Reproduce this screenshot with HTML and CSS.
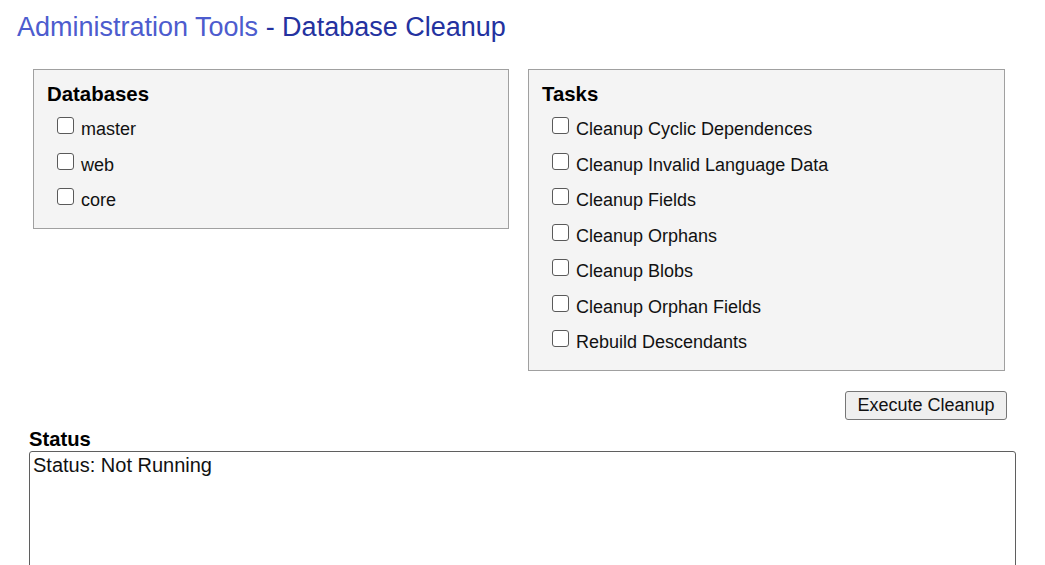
FILE: index.html
```html
<!DOCTYPE html>
<html lang="en">
<head>
<meta charset="utf-8">
<title>Database Cleanup</title>
<link rel="stylesheet" href="styles.css">
</head>
<body>
<h1 class="title"><a class="title-link" href="#">Administration Tools</a> - Database Cleanup</h1>
<div class="main">
  <div class="panels">
    <div class="panel">
      <div class="panel-head">Databases</div>
      <label class="row"><input type="checkbox" class="cb"><span class="lbl">master</span></label>
      <label class="row"><input type="checkbox" class="cb"><span class="lbl">web</span></label>
      <label class="row"><input type="checkbox" class="cb"><span class="lbl">core</span></label>
    </div>
    <div class="panel">
      <div class="panel-head">Tasks</div>
      <label class="row"><input type="checkbox" class="cb"><span class="lbl">Cleanup Cyclic Dependences</span></label>
      <label class="row"><input type="checkbox" class="cb"><span class="lbl">Cleanup Invalid Language Data</span></label>
      <label class="row"><input type="checkbox" class="cb"><span class="lbl">Cleanup Fields</span></label>
      <label class="row"><input type="checkbox" class="cb"><span class="lbl">Cleanup Orphans</span></label>
      <label class="row"><input type="checkbox" class="cb"><span class="lbl">Cleanup Blobs</span></label>
      <label class="row"><input type="checkbox" class="cb"><span class="lbl">Cleanup Orphan Fields</span></label>
      <label class="row"><input type="checkbox" class="cb"><span class="lbl">Rebuild Descendants</span></label>
    </div>
  </div>
  <div class="actions">
    <button class="btn" type="button">Execute Cleanup</button>
  </div>
</div>
<div class="status">
  <div class="status-head">Status</div>
  <textarea class="status-box">Status: Not Running</textarea>
</div>
</body>
</html>
```
FILE: styles.css
```css
html, body {
  margin: 0;
  padding: 0;
  background: #ffffff;
}
body {
  font-family: "Liberation Sans", Arial, sans-serif;
  color: #000000;
  overflow: hidden;
}
.title {
  margin: 12px 0 0 17px;
  font-size: 27px;
  line-height: 31px;
  font-weight: normal;
  color: #24329f;
}
.title-link {
  color: #4d5cce;
  text-decoration: none;
}
.main {
  margin: 26px 0 0 33px;
  width: 974px;
}
.panels {
  display: grid;
  grid-template-columns: 476px 477px;
  column-gap: 19px;
  align-items: start;
}
.panel {
  border: 1px solid #a0a0a0;
  background: #f4f4f4;
  padding: 13px 13px 4px 13px;
}
.panel-head {
  font-weight: bold;
  font-size: 20.4px;
  line-height: 23px;
  margin-bottom: 11px;
}
.row {
  display: flex;
  align-items: flex-start;
  height: 35.55px;
  padding-left: 10px;
}
.cb {
  appearance: none;
  -webkit-appearance: none;
  margin: 0 7px 0 0;
  width: 17px;
  height: 17px;
  box-sizing: border-box;
  border: 1.4px solid #5a5a5a;
  border-radius: 3px;
  background: #ffffff;
  flex: none;
}
.lbl {
  font-size: 18px;
  line-height: 21px;
  margin-top: 2px;
  color: #111111;
}
.actions {
  display: flex;
  justify-content: flex-end;
  margin-top: 20px;
}
.btn {
  width: 162px;
  height: 29px;
  box-sizing: border-box;
  border: 1px solid #767676;
  border-radius: 3px;
  background: #efefef;
  font-family: "Liberation Sans", Arial, sans-serif;
  font-size: 18px;
  line-height: 20px;
  color: #111111;
  padding: 0;
}
.status {
  margin: 8px 0 0 29px;
}
.status-head {
  font-weight: bold;
  font-size: 20.2px;
  line-height: 23px;
}
.status-box {
  display: block;
  width: 987px;
  height: 160px;
  box-sizing: border-box;
  margin: 0;
  border: 1px solid #5f5f5f;
  border-radius: 3px;
  padding: 2px 3px;
  font-family: "Liberation Sans", Arial, sans-serif;
  font-size: 20px;
  line-height: 23px;
  color: #111111;
  resize: none;
  background: #ffffff;
}
```
